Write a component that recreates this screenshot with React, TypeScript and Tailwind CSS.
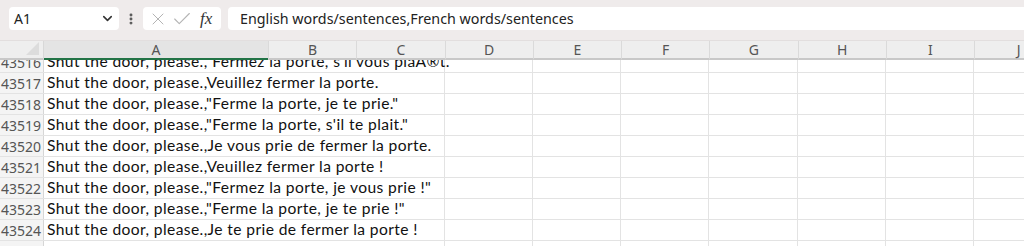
import { ChevronDown, EllipsisVertical, X, Check } from "lucide-react";

// 顶部名称框 + 编辑栏，下面是表格
const COLS = ["D", "E", "F", "G", "H", "I", "J"];

const ROWS: { n: number; text: string }[] = [
  { n: 43516, text: 'Shut the door, please.,"Fermez la porte, s\'il vous plaA®t."' },
  { n: 43517, text: "Shut the door, please.,Veuillez fermer la porte." },
  { n: 43518, text: 'Shut the door, please.,"Ferme la porte, je te prie."' },
  { n: 43519, text: 'Shut the door, please.,"Ferme la porte, s\'il te plait."' },
  { n: 43520, text: "Shut the door, please.,Je vous prie de fermer la porte." },
  { n: 43521, text: "Shut the door, please.,Veuillez fermer la porte !" },
  { n: 43522, text: 'Shut the door, please.,"Fermez la porte, je vous prie !"' },
  { n: 43523, text: 'Shut the door, please.,"Ferme la porte, je te prie !"' },
  { n: 43524, text: "Shut the door, please.,Je te prie de fermer la porte !" },
  { n: 43525, text: "" },
];

const uiFont = "font-['Noto_Sans','Open_Sans',sans-serif]";
const cellFont = "font-['Lato','Noto_Sans',sans-serif]";

function FormulaBar() {
  return (
    <div className={`h-[40px] bg-[#efebeb] flex items-start pt-[7px] pl-[9px] ${uiFont}`}>
      <div className="w-[110px] h-[23px] bg-white rounded-[4px] flex items-center pl-[5px] pr-[4px]">
        <span className="text-[14px] text-[#222]">A1</span>
        <ChevronDown className="ml-auto w-[15px] h-[15px] text-[#333]" strokeWidth={2.5} />
      </div>
      <div className="w-[24px] h-[23px] flex items-center justify-center">
        <EllipsisVertical className="w-[14px] h-[14px] text-[#555]" strokeWidth={3} />
      </div>
      <div className="w-[78px] h-[23px] bg-white rounded-[4px] flex items-center pl-[5px] gap-[3px]">
        <X className="w-[20px] h-[20px] text-[#b4b4b4]" strokeWidth={1.2} />
        <Check className="w-[22px] h-[22px] text-[#b4b4b4]" strokeWidth={1.2} />
        <span className="ml-[4px] font-['Liberation_Serif',serif] italic text-[17px] text-[#333] leading-none">
          fx
        </span>
      </div>
      <div className="ml-[7px] flex-1 h-[23px] bg-white rounded-l-[4px] flex items-center pl-[12px]">
        <span className="text-[14.3px] text-[#222] whitespace-nowrap">
          English words/sentences,French words/sentences
        </span>
      </div>
    </div>
  );
}

function HeaderRow() {
  return (
    <div className={`h-[20px] flex bg-[#eeeeee] border-t border-[#e2dede] text-[14px] text-[#555] ${uiFont}`}>
      <div className="w-[44px] shrink-0 relative border-r border-[#d8d8d8] border-b-2 border-b-[#c8c8c8]">
        <div className="absolute right-[4px] bottom-[3px] w-0 h-0 border-l-[13px] border-l-transparent border-b-[13px] border-b-[#dcdcdc]" />
      </div>
      <div className="w-[224px] shrink-0 flex items-center justify-center bg-[#e4e4e4] border-b-2 border-b-[#217346] leading-none">
        A
      </div>
      <div className="w-[88.25px] shrink-0 flex items-center justify-center border-l border-[#dadada] border-b-2 border-b-[#c8c8c8] leading-none">
        B
      </div>
      <div className="w-[88.25px] shrink-0 flex items-center justify-center border-l border-[#dadada] border-b-2 border-b-[#c8c8c8] leading-none">
        C
      </div>
      {COLS.map((c) => (
        <div
          key={c}
          className="w-[88.25px] shrink-0 flex items-center justify-center border-l border-[#dadada] border-b-2 border-b-[#c8c8c8] leading-none"
        >
          {c}
        </div>
      ))}
    </div>
  );
}

function DataRow({ n, text }: { n: number; text: string }) {
  return (
    <div className="h-[21px] flex border-b border-[#e3e3e3]">
      <div
        className={`w-[44px] shrink-0 bg-[#f4f4f4] border-r border-[#d6d6d6] flex items-center justify-end pr-[2px] text-[14px] text-[#555] ${uiFont}`}
      >
        {n}
      </div>
      <div
        className={`w-[400.5px] shrink-0 flex items-center pl-[3px] text-[15.6px] tracking-[0.4px] text-[#111] whitespace-nowrap border-r border-[#e3e3e3] ${cellFont}`}
      >
        {text}
      </div>
      {COLS.map((c) => (
        <div key={c} className="w-[88.25px] shrink-0 border-r border-[#e3e3e3]" />
      ))}
    </div>
  );
}

export default function App() {
  return (
    <div className="w-[1024px] h-[246px] overflow-hidden bg-white">
      <FormulaBar />
      <HeaderRow />
      {/* 表格区（第一行被表头遮住一部分） */}
      <div className="h-[186px] overflow-hidden">
        <div className="-mt-[8px]">
          {ROWS.map((r) => (
            <DataRow key={r.n} n={r.n} text={r.text} />
          ))}
        </div>
      </div>
    </div>
  );
}
